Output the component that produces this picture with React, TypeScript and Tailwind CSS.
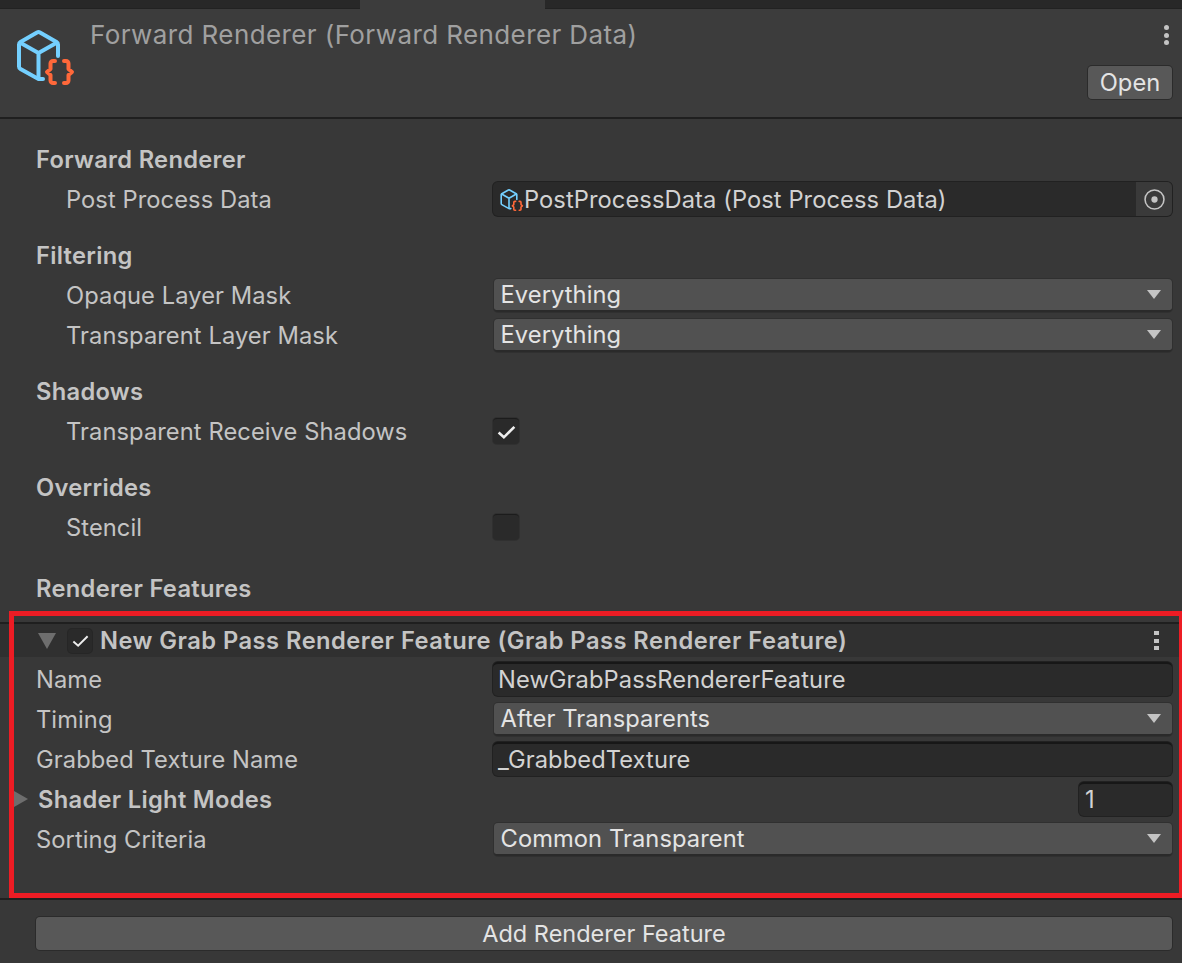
import React from "react";

const font = { fontFamily: "Inter, 'Liberation Sans', sans-serif" };

function ScriptIcon({ className }: { className: string }) {
  return (
    <svg viewBox="0 0 60 60" className={className} fill="none">
      <path d="M40 29V17.500a3 3 0 0 0-1.500-2.600L22 5.500a3 3 0 0 0-3 0L2.500 14.900A3 3 0 0 0 1 17.500v22a3 3 0 0 0 1.500 2.600L20.500 52H25" stroke="#74d0ff" strokeWidth="4" strokeLinecap="round" strokeLinejoin="round" transform="translate(2 2)" />
      <path d="M3 17l19.500 11L42 17M22.500 28v25" stroke="#74d0ff" strokeWidth="4" strokeLinejoin="round" />
      <path d="M39 36h-2a2.500 2.500 0 0 0-2.500 2.500V44L31 47l3.500 3v5.500A2.500 2.500 0 0 0 37 58h2M48 36h2a2.500 2.500 0 0 1 2.500 2.500V44l3.500 3-3.500 3v5.500A2.500 2.500 0 0 1 50 58h-2" stroke="#ff683a" strokeWidth="4" strokeLinecap="round" strokeLinejoin="round" />
    </svg>
  );
}

function Caret() {
  return (
    <svg viewBox="0 0 14 9" className="h-[9px] w-[14px]">
      <path d="M0 0h14L7 9z" fill="#c4c4c4" />
    </svg>
  );
}

function Label({ children, indent }: { children: React.ReactNode; indent?: boolean }) {
  return <div className={`${indent ? "pl-[30px]" : ""} w-[457px] shrink-0 text-[#c4c4c4]`}>{children}</div>;
}

function Dropdown({ value }: { value: string }) {
  return (
    <div className="mb-[1px] ml-[1px] flex h-[33px] flex-1 items-center justify-between rounded-[4px] border-b-2 border-b-[#2a2a2a] bg-[#515151] pl-[6.500px] pr-[11px] text-[#e4e4e4] shadow-[0_0_0_1px_#303030]">
      <span className="mt-[1px]">{value}</span>
      <Caret />
    </div>
  );
}

function TextField({ value }: { value: string }) {
  return (
    <div className="mb-[2px] flex h-[34px] flex-1 items-center rounded-[5px] border-t-2 border-t-[#171717] bg-[#2a2a2a] pl-[5px] text-[#d2d2d2] shadow-[0_0_0_1px_#212121]">
      {value}
    </div>
  );
}

function Row({ label, indent, children }: { label: string; indent?: boolean; children?: React.ReactNode }) {
  return (
    <div className="flex h-[40px] items-center">
      <Label indent={indent}>{label}</Label>
      {children}
    </div>
  );
}

function Check({ checked }: { checked?: boolean }) {
  return (
    <div className="mb-[2px] flex h-[26px] w-[26px] items-center justify-center rounded-[4px] border-t border-t-[#1c1c1c] bg-[#2a2a2a] shadow-[0_0_0_1px_#303030]">
      {checked && (
        <svg viewBox="0 0 20 20" className="h-[21px] w-[21px]" fill="none">
          <path d="M2.500 11l5 4.500L17.500 5.500" stroke="#eeeeee" strokeWidth="2.400" />
        </svg>
      )}
    </div>
  );
}

function Heading({ children }: { children: React.ReactNode }) {
  return <div className="flex h-[40px] items-center font-semibold tracking-[0.3px] text-[#c4c4c4]">{children}</div>;
}

export default function App() {
  return (
    <div style={font} className="h-[963px] w-[1182px] overflow-hidden bg-[#383838] text-[23.700px] leading-none tracking-[0.08px]">
      <div className="flex h-[9px] border-b border-b-[#222222] bg-[#282828]">
        <div className="ml-[360px] h-[9px] w-[185px] bg-[#3c3c3c]" />
      </div>
      <header className="relative h-[110px] border-b-2 border-b-[#1f1f1f] bg-[#3c3c3c]">
        <ScriptIcon className="absolute left-[16px] top-[16px] h-[60px] w-[60px]" />
        <div className="absolute left-[90px] top-[13px] text-[26px] tracking-[0.4px] text-[#a0a0a0]">Forward Renderer (Forward Renderer Data)</div>
        <div className="absolute right-[13px] top-[16px] flex flex-col gap-[2.500px]">
          <i className="h-[5px] w-[5px] rounded-full bg-[#c4c4c4]" />
          <i className="h-[5px] w-[5px] rounded-full bg-[#c4c4c4]" />
          <i className="h-[5px] w-[5px] rounded-full bg-[#c4c4c4]" />
        </div>
        <div className="absolute right-[10px] top-[57px] flex h-[33px] w-[84px] items-center justify-center rounded-[4px] bg-[#585858] text-[#e4e4e4] shadow-[0_0_0_1px_#2b2b2b]">Open</div>
      </header>

      <main className="pl-[36px] pr-[10px] pt-[21px]">
        <Heading>Forward Renderer</Heading>
        <Row label="Post Process Data" indent>
          <div className="mb-[2px] flex h-[34px] flex-1 items-center rounded-[5px] bg-[#2a2a2a] pl-[7px] text-[#d2d2d2] shadow-[0_0_0_1px_#212121]">
            <ScriptIcon className="h-[24px] w-[24px]" />
            <span className="mt-[2px] flex-1">PostProcessData (Post Process Data)</span>
            <div className="flex h-full w-[36px] items-center justify-center rounded-r-[5px] bg-[#3a3a3a]">
              <svg viewBox="0 0 20 20" className="h-[21px] w-[21px]" fill="none">
                <circle cx="10" cy="10" r="9" stroke="#c4c4c4" strokeWidth="1.500" />
                <circle cx="10" cy="10" r="3" fill="#c4c4c4" />
              </svg>
            </div>
          </div>
        </Row>
        <div className="mt-[16px]"><Heading>Filtering</Heading></div>
        <Row label="Opaque Layer Mask" indent><Dropdown value="Everything" /></Row>
        <Row label="Transparent Layer Mask" indent><Dropdown value="Everything" /></Row>
        <div className="mt-[16px]"><Heading>Shadows</Heading></div>
        <Row label="Transparent Receive Shadows" indent><Check checked /></Row>
        <div className="mt-[16px]"><Heading>Overrides</Heading></div>
        <Row label="Stencil" indent><Check /></Row>
        <div className="mt-[21px]"><Heading>Renderer Features</Heading></div>
      </main>

      <section className="relative mt-[13px]">
        <div className="mb-[3px] flex h-[35px] items-center justify-between border-t-2 border-t-[#1f1f1f] bg-[#303030] pl-[38px] pr-[23px]">
          <div className="flex items-center">
            <svg viewBox="0 0 18 16" className="mr-[12px] h-[16px] w-[18px]"><path d="M0 0h18L9 16z" fill="#6e6e6e" /></svg>
            <div className="mr-[8px] flex h-[24px] w-[24px] items-center justify-center rounded-[4px] bg-[#2a2a2a] shadow-[0_0_0_1px_#262626]">
              <svg viewBox="0 0 20 20" className="h-[19px] w-[19px]" fill="none">
                <path d="M2.500 11l5 4.500L17.500 5.500" stroke="#eeeeee" strokeWidth="2" />
              </svg>
            </div>
            <span className="font-semibold tracking-[0.47px] text-[#c4c4c4]">New Grab Pass Renderer Feature (Grab Pass Renderer Feature)</span>
          </div>
          <div className="flex flex-col gap-[3.500px]">
            <i className="h-[4px] w-[5px] bg-[#c4c4c4]" />
            <i className="h-[4px] w-[5px] bg-[#c4c4c4]" />
            <i className="h-[4px] w-[5px] bg-[#c4c4c4]" />
          </div>
        </div>
        <div className="pb-[38px] pl-[36px] pr-[10px]">
          <Row label="Name"><TextField value="NewGrabPassRendererFeature" /></Row>
          <Row label="Timing"><Dropdown value="After Transparents" /></Row>
          <Row label="Grabbed Texture Name"><TextField value="_GrabbedTexture" /></Row>
          <div className="flex h-[40px] items-center justify-between">
            <span className="ml-[2px] font-semibold tracking-[0.3px] text-[#c4c4c4]">Shader Light Modes</span>
            <div className="mb-[2px] flex h-[34px] w-[93px] items-center rounded-[5px] border-t-2 border-t-[#171717] bg-[#2a2a2a] pl-[6px] text-[#d2d2d2] shadow-[0_0_0_1px_#212121]">1</div>
          </div>
          <Row label="Sorting Criteria"><Dropdown value="Common Transparent" /></Row>
        </div>
        <svg viewBox="0 0 14 16" className="absolute left-[14px] top-[169px] h-[16px] w-[14px]"><path d="M0 0l14 8L0 16z" fill="#6e6e6e" /></svg>
        <div className="pointer-events-none absolute left-[9px] right-0 top-[-11px] h-[287px] border-[5px] border-r-[3px] border-[#ed1c24]" />
      </section>

      <footer className="border-t-2 border-t-[#1f1f1f] pl-[36px] pr-[10px] pt-[17px]">
        <div className="flex h-[33px] items-center justify-center rounded-[4px] bg-[#585858] text-[23.500px] tracking-normal text-[#e4e4e4] shadow-[0_0_0_1px_#2b2b2b]">Add Renderer Feature</div>
      </footer>
    </div>
  );
}
